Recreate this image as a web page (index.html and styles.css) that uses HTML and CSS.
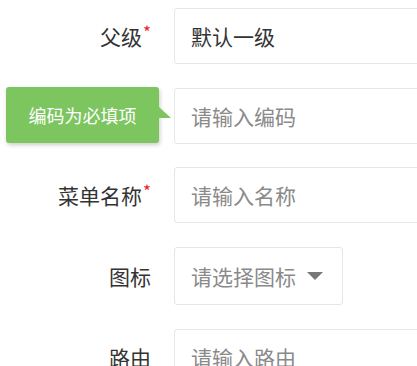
FILE: index.html
```html
<!DOCTYPE html>
<html lang="zh-CN">
<head>
    <meta charset="UTF-8">
    <title>菜单编辑</title>
    <link rel="stylesheet" href="styles.css">
</head>
<body>
    <form class="menu_form">
        <div class="row">
            <label class="label">父级<span class="req">*</span></label>
            <div class="input value">默认一级</div>
        </div>
        <div class="row">
            <label class="label">编码<span class="req">*</span></label>
            <input class="input" type="text" placeholder="请输入编码">
            <div class="tip">编码为必填项</div>
        </div>
        <div class="row">
            <label class="label">菜单名称<span class="req">*</span></label>
            <input class="input" type="text" placeholder="请输入名称">
        </div>
        <div class="row">
            <label class="label">图标</label>
            <div class="select">
                <span>请选择图标</span>
                <i class="caret"></i>
            </div>
        </div>
        <div class="row">
            <label class="label">路由</label>
            <input class="input" type="text" placeholder="请输入路由">
        </div>
    </form>
</body>
</html>
```

FILE: styles.css
```css
body {
    margin: 0;
    background-color: #fff;
    font-family: "Noto Sans CJK SC", "Noto Sans", sans-serif;
    overflow: hidden;
}
.menu_form {
    padding-top: 8px;
    width: 417px;
    overflow: hidden;
}
.row {
    position: relative;
    display: flex;
    align-items: center;
    margin-bottom: 23.6px;
}
.label {
    width: 151px;
    flex-shrink: 0;
    text-align: right;
    font-size: 21px;
    line-height: 28px;
    color: #333;
}
.req {
    color: #f5222d;
    font-size: 17px;
    line-height: 17px;
    vertical-align: top;
    position: relative;
    top: 1px;
    margin-left: 1px;
}
.input {
    box-sizing: border-box;
    flex-shrink: 0;
    margin-left: 23px;
    width: 300px;
    height: 56px;
    padding: 0 16px;
    border: 1px solid #e6e6e6;
    border-radius: 3px;
    font-family: inherit;
    font-size: 21px;
    color: #333;
    outline: none;
    background: #fff;
}
.input::placeholder {
    color: #8a8a8a;
}
.value {
    display: flex;
    align-items: center;
}
.select {
    box-sizing: border-box;
    margin-left: 23px;
    width: 169px;
    height: 58.5px;
    padding: 0 19px 0 16px;
    border: 1px solid #e6e6e6;
    border-radius: 3px;
    display: flex;
    align-items: center;
    justify-content: space-between;
    font-size: 21px;
    color: #8a8a8a;
}
.caret {
    width: 0;
    height: 0;
    border-left: 8px solid transparent;
    border-right: 8px solid transparent;
    border-top: 8px solid #777;
}
.tip {
    position: absolute;
    left: 6px;
    top: -0.5px;
    width: 153px;
    height: 56px;
    line-height: 56px;
    background-color: #7cc55f;
    border-radius: 3px;
    box-shadow: 1px 2px 4px rgba(0, 0, 0, 0.2);
    color: #fff;
    font-size: 18px;
    text-align: center;
}
.tip::after {
    content: "";
    position: absolute;
    left: 153px;
    top: 20px;
    border-top: 11px solid transparent;
    border-left: 12px solid #7cc55f;
}
```
